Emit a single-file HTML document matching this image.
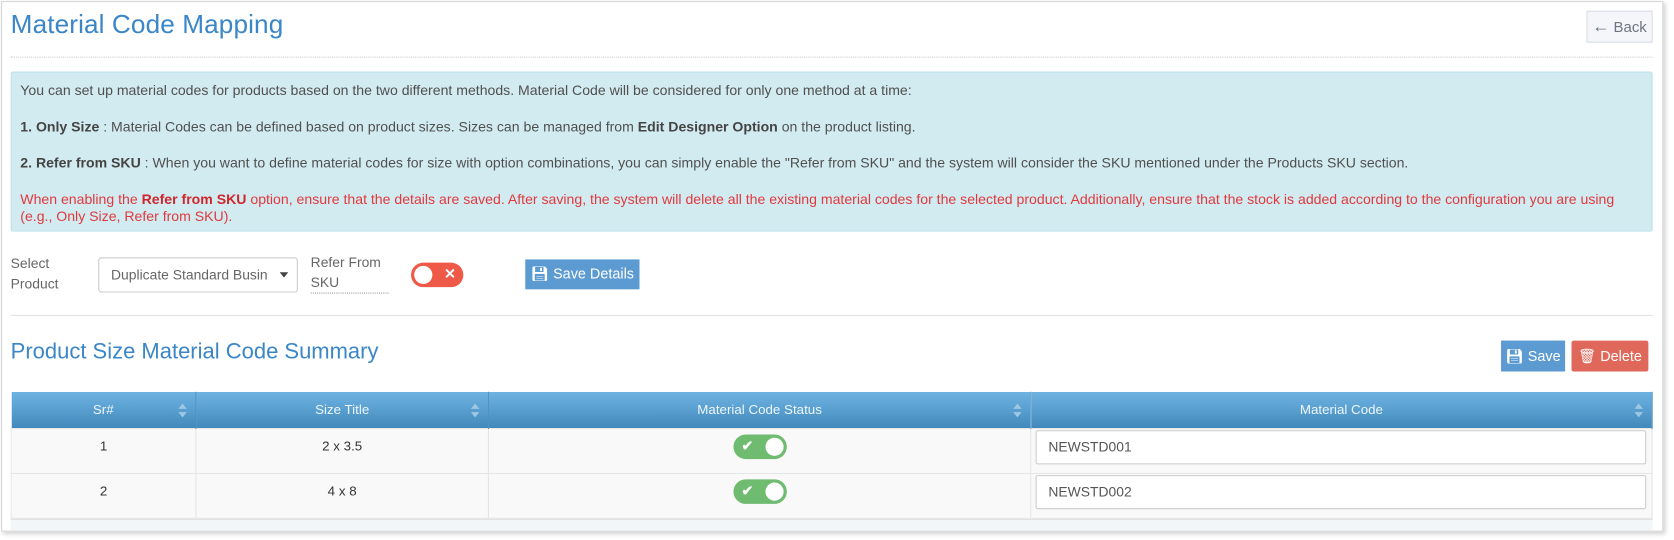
<!DOCTYPE html>
<html><head><meta charset="utf-8"><style>
*{box-sizing:border-box;margin:0;padding:0}
body{width:1674px;height:540px;background:#fff;font-family:"Liberation Sans",sans-serif;color:#555;position:relative;overflow:hidden}
#w{position:absolute;left:0;top:0;width:1568px;height:506px;transform:scale(1.0676);transform-origin:0 0}
.panel{position:absolute;left:1px;top:1px;width:1557px;height:497px;background:#fff;border:1px solid #d6d6d6;box-shadow:2px 2px 4px rgba(0,0,0,.18)}
.abs{position:absolute}
h1{position:absolute;left:10px;top:10px;font-weight:normal;font-size:24.5px;color:#3a86c8;letter-spacing:.1px}
.back{left:1486px;top:10px;width:62px;height:30px;border:1px solid #d9dde6;background:#f5f6fa;color:#6c7580;font-size:14px;line-height:28px;text-align:center}
.dot{left:10px;top:53px;width:1538px;border-top:1px dotted #ccc}
.alert{left:10px;top:67px;width:1538px;height:150px;background:#d2ebf0;border:1px solid #bde3ec;border-radius:2px;font-size:13.2px;letter-spacing:0;color:#505050}
.alert p{position:absolute;left:8px;white-space:nowrap}
.red{color:#e0393e}
b{color:#444}
.red b{color:#d0262b}
.lbl{font-size:13px;color:#666;line-height:19px}
.sel{left:92px;top:241px;width:187px;height:33px;border:1px solid #ccc;border-radius:3px;font-size:13px;color:#666;line-height:31px;padding-left:11px;overflow:hidden;white-space:nowrap}
.btn{color:#fff;font-size:13.5px;text-align:center}
table{position:absolute;left:10px;top:367px;width:1538px;border-collapse:collapse;font-size:12.5px}
th{height:34px;background:linear-gradient(#6eb3e2,#4289bb);color:#eef6fc;font-weight:normal;border-right:1px solid #4a8ebf;position:relative}
th:after{content:"";position:absolute;right:8px;top:11px;border:4px solid transparent;border-bottom:5px solid #9fc7e4;border-top:0;}
th:before{content:"";position:absolute;right:8px;top:19px;border:4px solid transparent;border-top:5px solid #9fc7e4;border-bottom:0;}
td{height:42px;background:#f9f9f9;border:1px solid #e6e6e6;text-align:center;vertical-align:top;padding-top:9px;color:#333}
.tog{display:inline-block;width:50px;height:23px;background:#6fbb6f;border-radius:12px;position:relative;margin-top:-4px}
.tog i{position:absolute;right:3px;top:3px;width:17px;height:17px;background:#fff;border-radius:50%}
.tog span{position:absolute;left:8px;top:3px;color:#fff;font-size:13px;font-weight:bold}
.inp{margin:-4px 0 0 4px;height:32px;border:1px solid #ccc;border-radius:2px;background:#fff;text-align:left;padding-left:11px;line-height:30px;font-size:13px;color:#555;width:572px}
</style></head><body><div id="w">
<div class="panel"></div>
<h1>Material Code Mapping</h1>
<div class="abs back"><span style="font-size:16px">&#8592;</span> Back</div>
<div class="abs dot"></div>
<div class="abs alert">
<p style="top:9px">You can set up material codes for products based on the two different methods. Material Code will be considered for only one method at a time:</p>
<p style="top:43px"><b>1. Only Size</b> : Material Codes can be defined based on product sizes. Sizes can be managed from <b>Edit Designer Option</b> on the product listing.</p>
<p style="top:77px"><b>2. Refer from SKU</b> : When you want to define material codes for size with option combinations, you can simply enable the "Refer from SKU" and the system will consider the SKU mentioned under the Products SKU section.</p>
<p class="red" style="top:111px">When enabling the <b>Refer from SKU</b> option, ensure that the details are saved. After saving, the system will delete all the existing material codes for the selected product. Additionally, ensure that the stock is added according to the configuration you are using</p>
<p class="red" style="top:127px">(e.g., Only Size, Refer from SKU).</p>
</div>
<div class="abs lbl" style="left:10px;top:237px">Select<br>Product</div>
<div class="abs sel">Duplicate Standard Busin<span style="position:absolute;right:8px;top:13px;border:4px solid transparent;border-top:5px solid #444;border-bottom:0"></span></div>
<div class="abs lbl" style="left:291px;top:236px;border-bottom:1px dotted #999;width:73px">Refer From<br>SKU</div>
<div class="abs" style="left:385px;top:246px;width:49px;height:23px;background:#ee5a47;border-radius:12px"><div style="position:absolute;left:3px;top:3px;width:17px;height:17px;background:#fff;border-radius:50%"></div><span style="position:absolute;left:31px;top:3px;color:#fff;font-weight:bold;font-size:13px">&#10005;</span></div>
<div class="abs btn" style="left:492px;top:243px;width:107px;height:28px;background:#5b9bd1;line-height:28px">&#128190;&#xFE0E; Save Details</div>
<div class="abs" style="left:10px;top:295px;width:1538px;border-top:1px solid #e2e2e2"></div>
<div class="abs" style="left:10px;top:318px;font-size:20.6px;color:#3a86c8">Product Size Material Code Summary</div>
<div class="abs btn" style="left:1406px;top:319px;width:60px;height:29px;background:#5b9bd1;line-height:29px">&#128190;&#xFE0E; Save</div>
<div class="abs btn" style="left:1472px;top:319px;width:72px;height:29px;background:#e0685a;border-radius:2px;line-height:29px">&#128465;&#xFE0E; Delete</div>
<table>
<tr><th style="width:173px">Sr#</th><th style="width:274px">Size Title</th><th style="width:508px">Material Code Status</th><th>Material Code</th></tr>
<tr><td>1</td><td>2 x 3.5</td><td><span class="tog"><span>&#10004;</span><i></i></span></td><td style="padding-top:5px"><div class="inp">NEWSTD001</div></td></tr>
<tr><td>2</td><td>4 x 8</td><td><span class="tog"><span>&#10004;</span><i></i></span></td><td style="padding-top:5px"><div class="inp">NEWSTD002</div></td></tr>
</table>
<div class="abs" style="left:10px;top:486px;width:1538px;height:11px;background:#f3f6f9;border-top:1px solid #e0e0e0"></div>
</div></body></html>
